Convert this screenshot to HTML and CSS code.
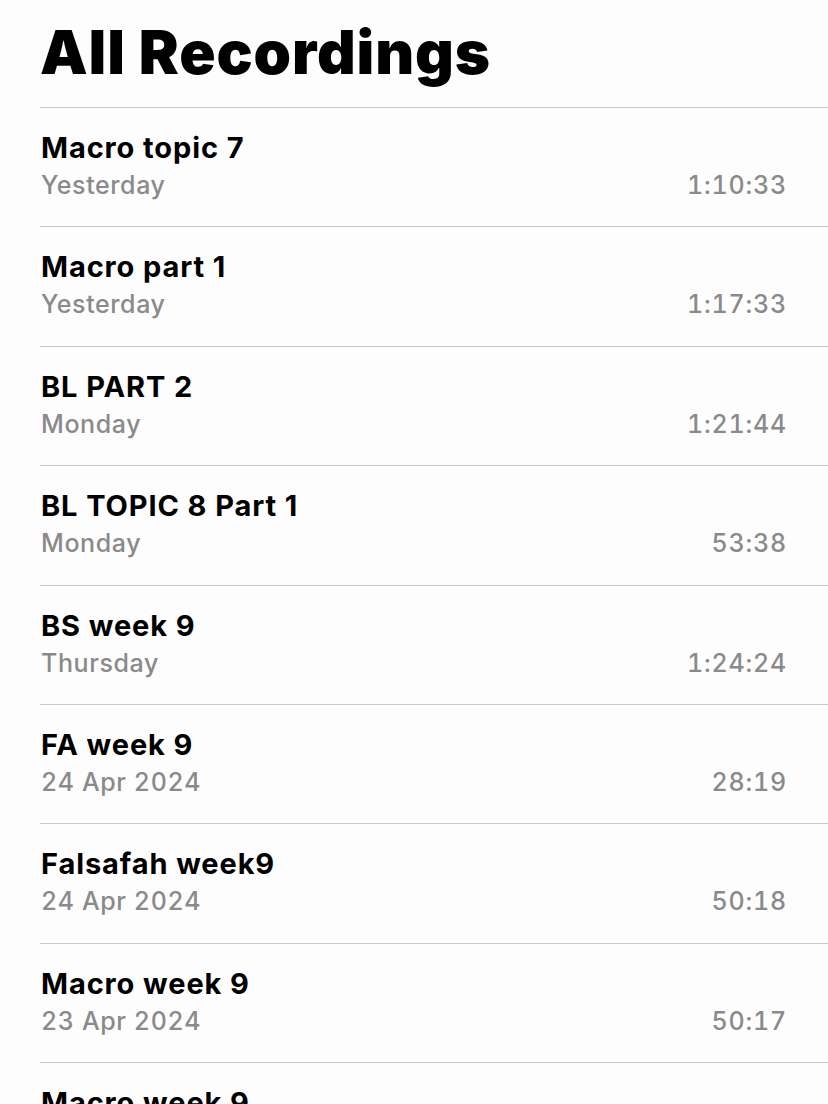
FILE: index.html
```html
<!DOCTYPE html>
<html>
<head>
<meta charset="utf-8">
<link rel="stylesheet" href="styles.css">
</head>
<body>
<div class="page">
  <h1 class="title">All Recordings</h1>
  <ul class="list">
    <li class="row"><div class="name">Macro topic 7</div><div class="meta"><span class="date">Yesterday</span><span class="dur">1:10:33</span></div></li>
    <li class="row"><div class="name">Macro part 1</div><div class="meta"><span class="date">Yesterday</span><span class="dur">1:17:33</span></div></li>
    <li class="row"><div class="name">BL PART 2</div><div class="meta"><span class="date">Monday</span><span class="dur">1:21:44</span></div></li>
    <li class="row"><div class="name">BL TOPIC 8 Part 1</div><div class="meta"><span class="date">Monday</span><span class="dur">53:38</span></div></li>
    <li class="row"><div class="name">BS week 9</div><div class="meta"><span class="date">Thursday</span><span class="dur">1:24:24</span></div></li>
    <li class="row"><div class="name">FA week 9</div><div class="meta"><span class="date">24 Apr 2024</span><span class="dur">28:19</span></div></li>
    <li class="row"><div class="name">Falsafah week9</div><div class="meta"><span class="date">24 Apr 2024</span><span class="dur">50:18</span></div></li>
    <li class="row"><div class="name">Macro week 9</div><div class="meta"><span class="date">23 Apr 2024</span><span class="dur">50:17</span></div></li>
    <li class="row"><div class="name">Macro week 9</div><div class="meta"><span class="date">23 Apr 2024</span><span class="dur">50:17</span></div></li>
  </ul>
</div>
</body>
</html>
```
FILE: styles.css
```css
html, body {
  margin: 0;
  padding: 0;
  background: #fdfdfd;
  overflow: hidden;
}
.page {
  padding-left: 40px;
  font-family: Inter, "Noto Sans", sans-serif;
  color: #000;
}
.title {
  margin: 0;
  height: 107px;
  box-sizing: border-box;
  padding-top: 20px;
  font-size: 60px;
  font-weight: 900;
  letter-spacing: 0.9px;
  line-height: 64px;
}
.list {
  list-style: none;
  margin: 0;
  padding: 0;
}
.row {
  border-top: 1px solid #c8c8c8;
  height: 119.4px;
  box-sizing: border-box;
  padding: 22px 41px 0 1px;
}
.name {
  font-size: 29px;
  font-weight: 700;
  letter-spacing: 0.9px;
  line-height: 36px;
}
.meta {
  display: flex;
  justify-content: space-between;
  font-size: 25px;
  font-weight: 500;
  letter-spacing: 0.6px;
  font-variant-numeric: tabular-nums;
  color: #8a8a8a;
  line-height: 34px;
  margin-top: 2px;
}
.dur {
  letter-spacing: 0.8px;
}
```
